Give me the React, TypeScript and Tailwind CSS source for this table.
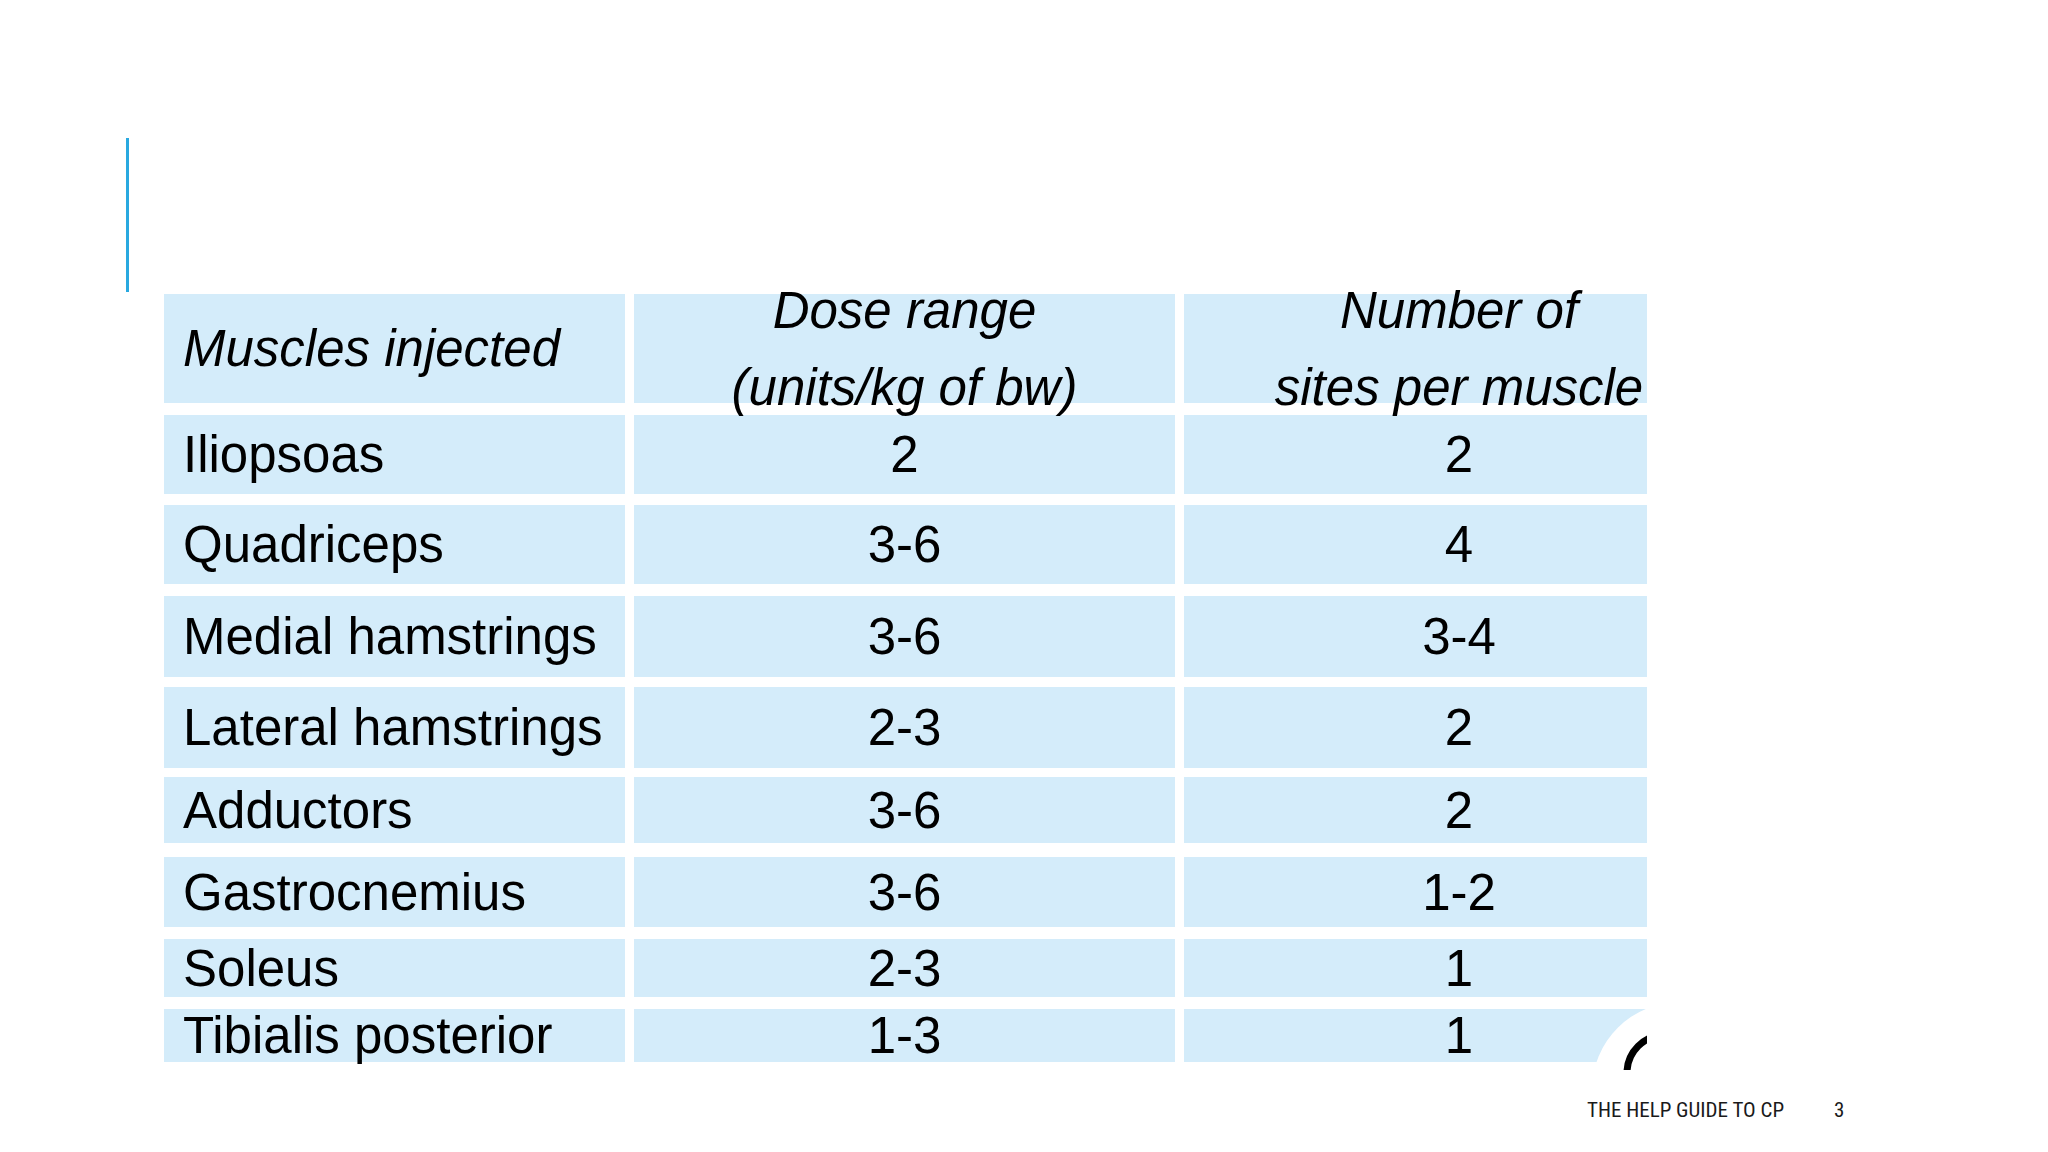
const rows = [
  { name: 'Iliopsoas', dose: '2', sites: '2', cls: 'grid-rows-[79px] mt-[12px]' },
  { name: 'Quadriceps', dose: '3-6', sites: '4', cls: 'grid-rows-[79px] mt-[11px]' },
  { name: 'Medial hamstrings', dose: '3-6', sites: '3-4', cls: 'grid-rows-[81px] mt-[12px]' },
  { name: 'Lateral hamstrings', dose: '2-3', sites: '2', cls: 'grid-rows-[81px] mt-[10px]' },
  { name: 'Adductors', dose: '3-6', sites: '2', cls: 'grid-rows-[66px] mt-[9px]' },
  { name: 'Gastrocnemius', dose: '3-6', sites: '1-2', cls: 'grid-rows-[70px] mt-[14px]' },
  { name: 'Soleus', dose: '2-3', sites: '1', cls: 'grid-rows-[58px] mt-[12px]' },
  { name: 'Tibialis posterior', dose: '1-3', sites: '1', cls: 'grid-rows-[53px] mt-[12px]' },
];

const cell = 'bg-[#d4ecfa] flex items-center min-h-0';

export default function App() {
  return (
    <div className="w-[2048px] h-[1152px] bg-white overflow-hidden font-['Liberation_Sans',Arial,sans-serif] text-black">
      {/* accent bar */}
      <div className="ml-[126px] pt-[138px]">
        <div className="w-[3px] h-[154px] bg-[#29a9e0]" />
      </div>

      {/* table picture */}
      <div className="relative ml-[164px] mt-[2px] w-[1483px] pb-[8px] text-[51px] leading-none">
        <div className="grid grid-cols-[461px_541px_463px] grid-rows-[109px] gap-x-[9px]">
          <div className={`${cell} pl-[19px] italic`}>Muscles injected</div>
          <div className={`${cell} justify-center`}>
            <div className="relative z-10 italic leading-[77px] text-center whitespace-nowrap">
              Dose range
              <br />
              (units/kg of bw)
            </div>
          </div>
          <div className={`${cell} justify-center pl-[87px]`}>
            <div className="relative z-10 italic leading-[77px] text-center whitespace-nowrap">
              Number of
              <br />
              sites per muscle
            </div>
          </div>
        </div>

        {rows.map((r) => (
          <div key={r.name} className={`grid grid-cols-[461px_541px_463px] gap-x-[9px] ${r.cls}`}>
            <div className={`${cell} pl-[19px] whitespace-nowrap`}>{r.name}</div>
            <div className={`${cell} justify-center`}>{r.dose}</div>
            <div className={`${cell} justify-center pl-[87px]`}>{r.sites}</div>
          </div>
        ))}

        {/* corner of the neighbouring logo that bleeds into the picture */}
        <svg className="absolute left-[1400px] top-[690px]" width="83" height="86" viewBox="0 0 83 86">
          <circle cx="116" cy="106" r="88" fill="#ffffff" />
          <circle cx="101" cy="89" r="38" fill="none" stroke="#000000" strokeWidth="7" />
        </svg>
      </div>

      {/* footer */}
      <div className="flex items-center gap-[50px] pl-[1587px] mt-[28px] text-[21px] leading-[24px] text-[#1a1a1a] font-['Liberation_Sans_Narrow','Roboto_Condensed',Roboto,sans-serif]">
        <span>THE HELP GUIDE TO CP</span>
        <span>3</span>
      </div>
    </div>
  );
}
